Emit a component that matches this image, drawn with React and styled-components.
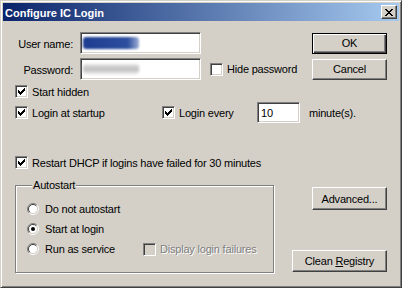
import React from 'react'
import styled, { createGlobalStyle } from 'styled-components'

const GlobalStyle = createGlobalStyle`
  html, body { margin: 0; padding: 0; background: #d4d0c8; }
  body {
    font-family: "Liberation Sans", Arial, sans-serif;
    font-size: 11px;
    letter-spacing: -0.2px;
    color: #000;
  }
  * { box-sizing: border-box; }
`

const Window = styled.div`
  width: 402px;
  height: 288px;
  background: #d4d0c8;
  border: 1px solid;
  border-color: #d4d0c8 #404040 #404040 #d4d0c8;
  box-shadow: inset 1px 1px #fff, inset -1px -1px #808080;
  padding: 2px;
  display: flex;
  flex-direction: column;
`

const TitleBar = styled.div`
  height: 18px;
  flex: none;
  display: flex;
  align-items: center;
  justify-content: space-between;
  padding: 0 2px;
  background: linear-gradient(to right, #0a246a, #a6caf0);
`

const Title = styled.span`
  color: #fff;
  font-weight: bold;
  font-size: 11px;
  letter-spacing: 0;
  padding-top: 1px;
`

const CaptionButton = styled.div`
  width: 16px;
  height: 14px;
  background: #d4d0c8;
  border: 1px solid;
  border-color: #fff #404040 #404040 #fff;
  box-shadow: inset -1px -1px #808080;
  display: flex;
  align-items: center;
  justify-content: center;
  padding-right: 1px;
`

const Body = styled.div`
  flex: 1;
  display: flex;
  flex-direction: column;
  padding: 11px 12px 0 0;
`

const TopGrid = styled.div`
  display: grid;
  grid-template-columns: 70px 121px 1fr 75px;
  grid-template-rows: 22px 22px;
  row-gap: 4px;
  align-items: center;
`

const Label = styled.span`
  text-align: right;
  padding-top: 2px;
`

const Field = styled.div`
  width: ${p => p.$w || 121}px;
  height: ${p => p.$h || 22}px;
  margin-left: ${p => p.$ml || 0}px;
  background: #fff;
  border: 1px solid;
  border-color: #808080 #fff #fff #808080;
  box-shadow: inset 1px 1px #404040, inset -1px -1px #d4d0c8;
  padding: 2px 3px;
  display: flex;
  align-items: center;
  overflow: hidden;
`

const Smudge = styled.div`
  width: 56px;
  height: ${p => (p.$blue ? 12 : 10)}px;
  border-radius: 3px;
  background: ${p =>
    p.$blue
      ? 'linear-gradient(to right, #1d3d90 0%, #2d4f9e 80%, #9fb0d6 100%)'
      : 'linear-gradient(to bottom, #e4e4e4 0%, #bdbdbd 50%, #e6e6e6 100%)'};
  filter: blur(${p => (p.$blue ? 1.1 : 1.6)}px);
  margin-left: -1px;
`

const Button = styled.button`
  width: ${p => p.$w || 75}px;
  height: ${p => p.$h || 22}px;
  background: #d4d0c8;
  font-family: inherit;
  font-size: 11px;
  letter-spacing: -0.2px;
  color: #000;
  padding: 0;
  border: 1px solid;
  border-color: ${p => (p.$default ? '#000' : '#fff #404040 #404040 #fff')};
  box-shadow: ${p =>
    p.$default
      ? 'inset 1px 1px #fff, inset -1px -1px #404040, inset -2px -2px #808080'
      : 'inset -1px -1px #808080'};
  justify-self: end;
  u { text-decoration: underline; text-underline-offset: 1px; }
`

const CheckItem = styled.label`
  display: flex;
  align-items: center;
  gap: 4px;
  width: ${p => (p.$w ? `${p.$w}px` : 'auto')};
  color: ${p => (p.$disabled ? '#808080' : '#000')};
  text-shadow: ${p => (p.$disabled ? '1px 1px #fff' : 'none')};
  white-space: nowrap;
`

const Box = styled.span`
  width: 13px;
  height: 13px;
  flex: none;
  background: ${p => (p.$disabled ? '#d4d0c8' : '#fff')};
  border: 1px solid;
  border-color: #808080 #fff #fff #808080;
  box-shadow: inset 1px 1px #404040, inset -1px -1px #d4d0c8;
  display: flex;
  align-items: flex-start;
  padding: 2px;
`

const Row = styled.div`
  display: flex;
  align-items: center;
  height: ${p => p.$h || 13}px;
  margin-top: ${p => p.$mt || 0}px;
  padding-left: ${p => p.$pl || 12}px;
`

const HideCell = styled.div`
  margin-left: 16px;
`

const Unit = styled.span`
  margin-left: 9px;
`

const Bottom = styled.div`
  display: flex;
  margin-top: 10px;
  padding-left: 12px;
`

const Group = styled.fieldset`
  width: 259px;
  height: 94px;
  margin: 0;
  padding: 7px 0 0 11px;
  border: 1px solid #808080;
  box-shadow: 1px 1px #fff, inset 1px 1px #fff;
  display: flex;
  flex-direction: column;
  legend {
    margin-left: 5px;
    padding: 0 1px;
    background: #d4d0c8;
    line-height: 13px;
  }
`

const RadioRow = styled.div`
  display: flex;
  align-items: center;
  height: 20px;
`

const RadioItem = styled.label`
  display: flex;
  align-items: center;
  gap: 6px;
  width: ${p => (p.$w ? `${p.$w}px` : 'auto')};
`

const SideButtons = styled.div`
  flex: 1;
  display: flex;
  flex-direction: column;
  align-items: flex-end;
  justify-content: space-between;
  padding: 8px 0 0;
  height: 93px;
`

function CloseGlyph() {
  const rows = [[0, 6], [1, 5], [2, 4], [3], [2, 4], [1, 5], [0, 6]]
  return (
    <svg width="8" height="7" viewBox="0 0 8 7" shapeRendering="crispEdges">
      {rows.map((xs, y) =>
        xs.map(x => <rect key={`${y}-${x}`} x={x} y={y} width="2" height="1" fill="#000" />)
      )}
    </svg>
  )
}

function Check({ checked, disabled }) {
  const tops = [2, 3, 4, 3, 2, 1, 0]
  return (
    <Box $disabled={disabled}>
      {checked && (
        <svg width="7" height="7" viewBox="0 0 7 7" shapeRendering="crispEdges">
          {tops.map((t, i) => <rect key={i} x={i} y={t} width="1" height="3" fill="#000" />)}
        </svg>
      )}
    </Box>
  )
}

function Checkbox({ label, checked, disabled, w }) {
  return (
    <CheckItem $w={w} $disabled={disabled}>
      <Check checked={checked} disabled={disabled} />
      <span>{label}</span>
    </CheckItem>
  )
}

function Radio({ label, checked, w }) {
  return (
    <RadioItem $w={w}>
      <svg width="12" height="12" viewBox="0 0 12 12">
        <circle cx="6" cy="6" r="4.5" fill="#fff" />
        <path d="M2.1 9.9 A5.5 5.5 0 0 1 9.9 2.1" fill="none" stroke="#808080" />
        <path d="M9.9 2.1 A5.5 5.5 0 0 1 2.1 9.9" fill="none" stroke="#fff" />
        <path d="M2.8 9.2 A4.5 4.5 0 0 1 9.2 2.8" fill="none" stroke="#404040" />
        <path d="M9.2 2.8 A4.5 4.5 0 0 1 2.8 9.2" fill="none" stroke="#d4d0c8" />
        {checked && <circle cx="6" cy="6" r="2" fill="#000" />}
      </svg>
      <span>{label}</span>
    </RadioItem>
  )
}

export default function App() {
  return (
    <>
      <GlobalStyle />
      <Window>
        <TitleBar>
          <Title>Configure IC Login</Title>
          <CaptionButton>
            <CloseGlyph />
          </CaptionButton>
        </TitleBar>
        <Body>
          <TopGrid>
            <Label>User name:</Label>
            <Field $ml={7}>
              <Smudge $blue />
            </Field>
            <span />
            <Button $default $h={21}>OK</Button>
            <Label>Password:</Label>
            <Field $ml={7}>
              <Smudge />
            </Field>
            <HideCell>
              <Checkbox label="Hide password" />
            </HideCell>
            <Button $h={21}>Cancel</Button>
          </TopGrid>

          <Row $mt={5}>
            <Checkbox label="Start hidden" checked />
          </Row>
          <Row $mt={4} $h={21}>
            <Checkbox label="Login at startup" checked w={147} />
            <Checkbox label="Login every" checked w={95} />
            <Field $w={43} $h={21}>10</Field>
            <Unit>minute(s).</Unit>
          </Row>
          <Row $mt={33}>
            <Checkbox label="Restart DHCP if logins have failed for 30 minutes" checked />
          </Row>

          <Bottom>
            <Group>
              <legend>Autostart</legend>
              <RadioRow>
                <Radio label="Do not autostart" />
              </RadioRow>
              <RadioRow>
                <Radio label="Start at login" checked />
              </RadioRow>
              <RadioRow>
                <Radio label="Run as service" w={116} />
                <Checkbox label="Display login failures" disabled />
              </RadioRow>
            </Group>
            <SideButtons>
              <Button $h={23}>Advanced...</Button>
              <Button $w={95}>
                Clean <u>R</u>egistry
              </Button>
            </SideButtons>
          </Bottom>
        </Body>
      </Window>
    </>
  )
}
